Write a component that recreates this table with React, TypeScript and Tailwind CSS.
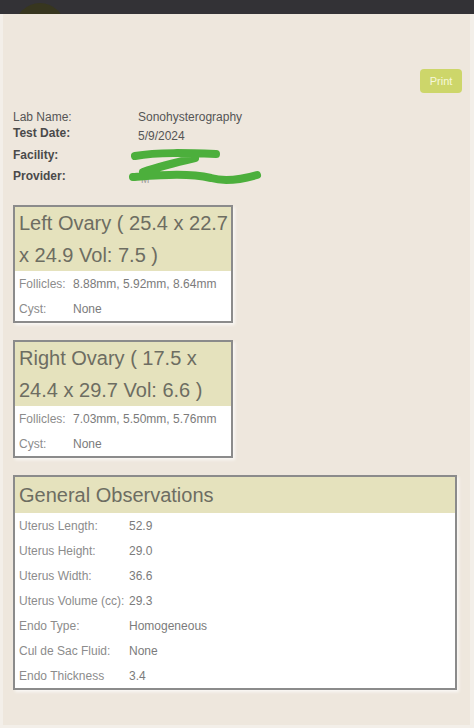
import { ReactNode } from 'react';

const ovaries = [
  {
    title: 'Left Ovary ( 25.4 x 22.7 x 24.9 Vol: 7.5 )',
    follicles: '8.88mm, 5.92mm, 8.64mm',
    cyst: 'None',
  },
  {
    title: 'Right Ovary ( 17.5 x 24.4 x 29.7 Vol: 6.6 )',
    follicles: '7.03mm, 5.50mm, 5.76mm',
    cyst: 'None',
  },
];

const observations = [
  ['Uterus Length:', '52.9'],
  ['Uterus Height:', '29.0'],
  ['Uterus Width:', '36.6'],
  ['Uterus Volume (cc):', '29.3'],
  ['Endo Type:', 'Homogeneous'],
  ['Cul de Sac Fluid:', 'None'],
  ['Endo Thickness', '3.4'],
];

function Card({
  title,
  children,
  className,
  headerClass,
}: {
  title: string;
  children: ReactNode;
  className?: string;
  headerClass: string;
}) {
  return (
    <div
      className={`border-2 border-[#8b8b8b] bg-white shadow-[2px_2px_3px_rgba(255,255,255,0.7)] ${className ?? ''}`}
    >
      <div className={`bg-[#e5e2bd] pl-1 text-[20px] text-[#6d6d62] ${headerClass}`}>{title}</div>
      {children}
    </div>
  );
}

function Row({ label, value, labelWidth }: { label: string; value: string; labelWidth: string }) {
  return (
    <div className="flex h-[25px] items-center pl-1 text-[12px]">
      <span className={`${labelWidth} shrink-0 whitespace-nowrap text-[#8c8c8c]`}>{label}</span>
      <span className="whitespace-nowrap text-[#7b7b7b]">{value}</span>
    </div>
  );
}

export default function App() {
  return (
    <div
      className="flex h-[728px] w-full flex-col overflow-hidden bg-[#f3efe9]"
      style={{ fontFamily: '"Liberation Sans", Arial, sans-serif' }}
    >
      {/* Top bar */}
      <div className="relative h-[14px] shrink-0 overflow-hidden bg-[#333236]">
        <div className="absolute left-[15px] top-[3px] h-[50px] w-[50px] rounded-full bg-[#37361f]" />
      </div>

      {/* Report panel */}
      <div className="mb-[3px] ml-[3px] mr-[4px] flex-1 bg-[#eee7dd] pl-[10px] pt-[55px]">
        <div className="flex justify-end pr-[8px]">
          <button className="h-[24px] w-[42px] rounded-[4px] bg-[#cdd66a] text-[11px] text-[#f6f8dc]">
            Print
          </button>
        </div>

        <div className="pr-[13px]">
          {/* Lab info */}
          <div className="relative mt-[16px] text-[12px] text-[#555]">
            <div className="flex h-[16px] leading-4">
              <span className="w-[125px] shrink-0">Lab Name:</span>
              <span>Sonohysterography</span>
            </div>
            <div className="flex h-[20px] leading-4">
              <span className="w-[125px] shrink-0 font-bold text-[#4a4a4a]">Test Date:</span>
              <span className="mt-[3px]">5/9/2024</span>
            </div>
            <div className="flex h-[21px] leading-[21px]">
              <span className="w-[125px] shrink-0 font-bold text-[#4a4a4a]">Facility:</span>
            </div>
            <div className="flex h-[21px] leading-[21px]">
              <span className="w-[125px] shrink-0 font-bold text-[#4a4a4a]">Provider:</span>
              <span className="pl-[3px] pt-[3px] text-[10px] text-[#999]">M</span>
            </div>
            {/* green marker scribble over the redacted values */}
            <svg
              className="absolute left-[100px] top-[35px]"
              width="150"
              height="46"
              viewBox="0 0 150 46"
              fill="none"
            >
              <path
                d="M22 12 C 45 8, 75 9, 103 10 M82 14 C 65 18, 48 22, 30 28 M20 33 C 50 31, 75 29, 98 34 C 112 38, 130 35, 144 31"
                stroke="#4caf3c"
                strokeWidth="8"
                strokeLinecap="round"
              />
            </svg>
          </div>

          {/* Ovaries */}
          {ovaries.map((o, i) => (
            <Card
              key={o.title}
              title={o.title}
              headerClass="leading-8"
              className={`w-[220px] ${i === 0 ? 'mt-[18px]' : 'mt-[17px]'}`}
            >
              <Row label="Follicles:" value={o.follicles} labelWidth="w-[54px]" />
              <Row label="Cyst:" value={o.cyst} labelWidth="w-[54px]" />
            </Card>
          ))}

          {/* General observations */}
          <Card title="General Observations" headerClass="leading-9" className="mt-[17px]">
            {observations.map(([label, value]) => (
              <Row key={label} label={label} value={value} labelWidth="w-[110px]" />
            ))}
          </Card>
        </div>
      </div>
    </div>
  );
}
